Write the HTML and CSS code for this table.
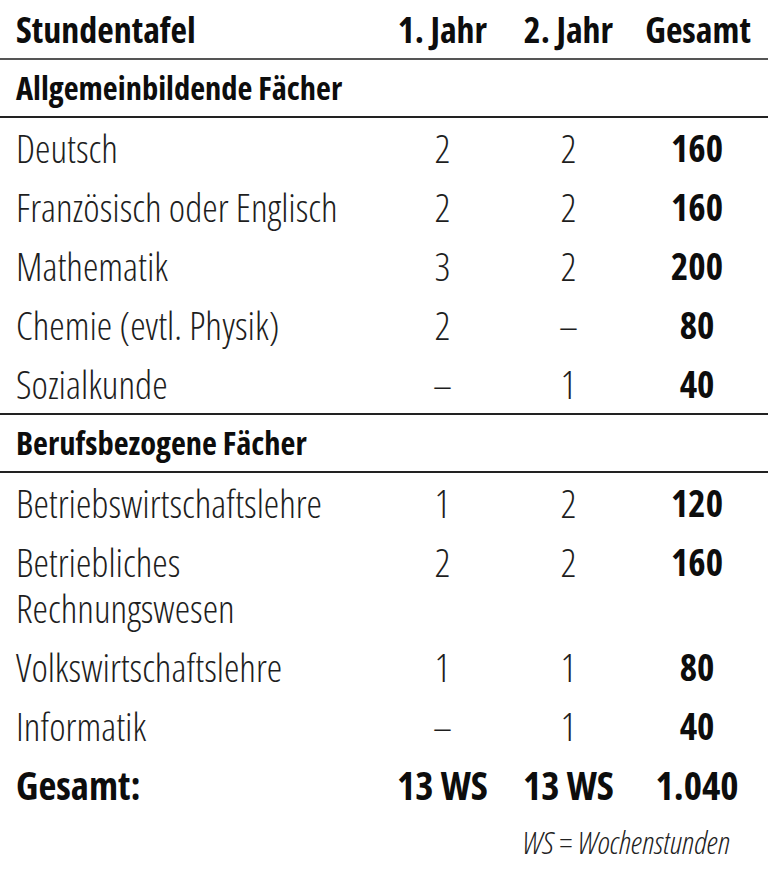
FILE: index.html
```html
<!DOCTYPE html>
<html lang="de">
<head>
<meta charset="utf-8">
<title>Stundentafel</title>
<link rel="stylesheet" href="styles.css">
</head>
<body>
<table class="plan">
  <colgroup>
    <col class="c-subject">
    <col class="c-year">
    <col class="c-year2">
    <col class="c-total">
  </colgroup>
  <thead>
    <tr class="head">
      <th class="subject">Stundentafel</th>
      <th>1. Jahr</th>
      <th>2. Jahr</th>
      <th class="sum">Gesamt</th>
    </tr>
  </thead>
  <tbody>
    <tr class="section"><th colspan="4">Allgemeinbildende Fächer</th></tr>
    <tr><td class="subject">Deutsch</td><td>2</td><td>2</td><td class="sum">160</td></tr>
    <tr><td class="subject">Französisch oder Englisch</td><td>2</td><td>2</td><td class="sum">160</td></tr>
    <tr><td class="subject">Mathematik</td><td>3</td><td>2</td><td class="sum">200</td></tr>
    <tr><td class="subject">Chemie (evtl. Physik)</td><td>2</td><td>–</td><td class="sum">80</td></tr>
    <tr><td class="subject">Sozialkunde</td><td>–</td><td>1</td><td class="sum">40</td></tr>
    <tr class="section"><th colspan="4">Berufsbezogene Fächer</th></tr>
    <tr><td class="subject">Betriebswirtschaftslehre</td><td>1</td><td>2</td><td class="sum">120</td></tr>
    <tr><td class="subject">Betriebliches<br>Rechnungswesen</td><td>2</td><td>2</td><td class="sum">160</td></tr>
    <tr><td class="subject">Volkswirtschaftslehre</td><td>1</td><td>1</td><td class="sum">80</td></tr>
    <tr><td class="subject">Informatik</td><td>–</td><td>1</td><td class="sum">40</td></tr>
    <tr class="total"><td class="subject">Gesamt:</td><td>13 WS</td><td>13 WS</td><td class="sum">1.040</td></tr>
  </tbody>
</table>
<p class="note">WS = Wochenstunden</p>
</body>
</html>
```
FILE: styles.css
```css
html, body {
  margin: 0;
  padding: 0;
  background: #fff;
}
body {
  font-family: "Open Sans", "Liberation Sans", sans-serif;
  font-stretch: 75%;
  color: #0d0d0d;
}
.plan {
  width: 768px;
  border-collapse: collapse;
}
.c-subject { width: 380px; }
.c-year { width: 125px; }
.c-year2 { width: 127px; }
.c-total { width: 136px; }

.plan th, .plan td {
  padding: 6.5px 0;
  text-align: center;
  vertical-align: top;
  line-height: 46px;
}
.plan .subject {
  text-align: left;
  padding-left: 16px;
}
.plan .sum {
  padding-right: 6px;
}
.head th {
  font-size: 36px;
  font-weight: 700;
  border-bottom: 2px solid #555;
  padding: 7px 0 5px;
}
.head th.subject { padding-left: 16px; }
.head th.sum { padding-right: 4px; }
.plan .section th {
  text-align: left;
  padding: 5px 0 5px 16px;
  font-size: 32.5px;
  font-weight: 700;
  border-bottom: 2px solid #222;
}
.plan td {
  font-size: 39px;
  font-weight: 300;
  color: #1e1e1e;
}
.plan td.sum {
  font-weight: 700;
  font-size: 37px;
  color: #0d0d0d;
}
.plan tr + .section th {
  border-top: 2px solid #222;
}
.plan .total td {
  font-weight: 700;
  font-size: 39px;
  color: #0d0d0d;
}
.note {
  margin: 6px 0 0;
  padding-right: 38px;
  text-align: right;
  font-size: 32px;
  font-weight: 300;
  font-style: italic;
  color: #222;
}
```
